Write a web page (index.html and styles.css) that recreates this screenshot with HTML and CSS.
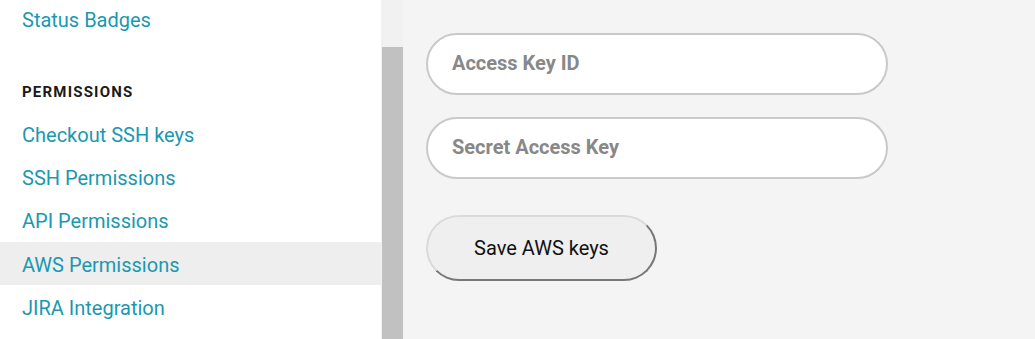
FILE: index.html
```html
<!DOCTYPE html>
<html lang="en">
<head>
<meta charset="utf-8">
<title>AWS Permissions</title>
<link rel="stylesheet" href="styles.css">
</head>
<body>
<div class="layout">
  <aside class="sidebar">
    <ul class="nav">
      <li class="nav-item"><a href="#">Status Badges</a></li>
    </ul>
    <div class="nav-header">PERMISSIONS</div>
    <ul class="nav">
      <li class="nav-item"><a href="#">Checkout SSH keys</a></li>
      <li class="nav-item"><a href="#">SSH Permissions</a></li>
      <li class="nav-item"><a href="#">API Permissions</a></li>
      <li class="nav-item active"><a href="#">AWS Permissions</a></li>
      <li class="nav-item"><a href="#">JIRA Integration</a></li>
    </ul>
  </aside>
  <div class="scrollbar"><div class="thumb"></div></div>
  <main class="main">
    <form class="aws-form">
      <input class="field" type="text" placeholder="Access Key ID">
      <input class="field" type="text" placeholder="Secret Access Key">
      <button class="save-btn" type="button">Save AWS keys</button>
    </form>
  </main>
</div>
</body>
</html>
```
FILE: styles.css
```css
html, body {
  margin: 0;
  padding: 0;
  height: 339px;
  overflow: hidden;
  font-family: Roboto, "Liberation Sans", sans-serif;
}
.layout {
  display: flex;
  height: 339px;
}
.sidebar {
  width: 381px;
  flex: none;
  background: #ffffff;
  overflow: hidden;
}
.nav {
  list-style: none;
  margin: 0;
  padding: 0;
}
.sidebar > .nav:first-child {
  margin-top: -3px;
}
.nav-item {
  box-sizing: border-box;
  height: 43.3px;
  line-height: 43.3px;
  padding: 1.5px 0 0 22px;
  font-size: 20px;
}
.nav-item a {
  color: #1a98b1;
  text-decoration: none;
}
.nav-item.active {
  background: #eeeeee;
}
.nav-header {
  padding: 40px 0 0 22px;
  margin-bottom: 8px;
  line-height: 24px;
  font-size: 15px;
  font-weight: 700;
  letter-spacing: 1.2px;
  color: #1a1a1a;
}
.scrollbar {
  width: 22px;
  flex: none;
  background: #f1f1f1;
  display: flex;
  flex-direction: column;
}
.thumb {
  margin-top: 47px;
  margin-left: 1px;
  flex: 1;
  background: #c1c1c1;
}
.main {
  flex: 1;
  background: #f4f4f4;
  padding: 33px 0 0 23px;
}
.aws-form {
  display: flex;
  flex-direction: column;
  align-items: flex-start;
}
.field {
  box-sizing: border-box;
  width: 462px;
  height: 62px;
  margin: 0 0 22px 0;
  padding: 0 0 3px 24px;
  border: 2px solid #c9c9c9;
  border-radius: 31px;
  background: #ffffff;
  font-family: Roboto, "Liberation Sans", sans-serif;
  font-size: 20px;
  font-weight: 700;
  color: #333;
  outline: none;
}
.field::placeholder {
  color: #888888;
  opacity: 1;
}
.save-btn {
  box-sizing: border-box;
  margin-top: 14px;
  width: 231px;
  height: 66px;
  border-width: 2.5px;
  border-style: solid;
  border-color: #dadada #777777 #777777 #dadada;
  border-radius: 33px;
  background: #efefef;
  font-family: Roboto, "Liberation Sans", sans-serif;
  font-size: 20px;
  color: #111111;
  padding: 0;
}
```
